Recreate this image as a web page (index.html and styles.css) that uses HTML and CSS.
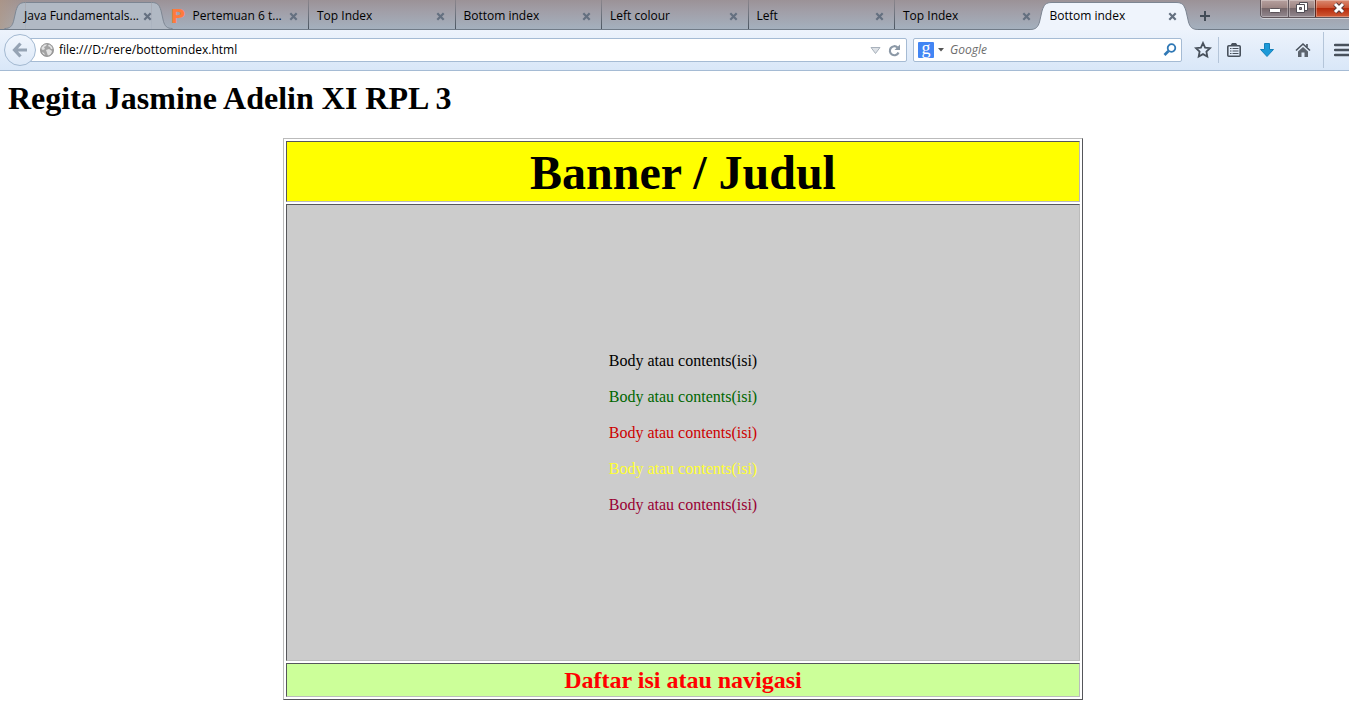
FILE: index.html
```html
<!DOCTYPE html>
<html>
<head>
<meta charset="utf-8">
<title>Bottom index</title>
<link rel="stylesheet" href="styles.css">
</head>

<body>

<!-- shared icons -->
<svg class="defs" width="0" height="0">
	<symbol id="x" viewBox="0 0 9 9"><path d="M1.3 1.3L7.7 7.7M7.7 1.3L1.3 7.7" fill="none" stroke="#647080" stroke-width="2.2"/></symbol>
	<symbol id="curve" viewBox="0 0 22 28"><path d="M0 27.500C6 27.500 8 25 9.500 20L12 9C14 2.500 16 .5 22 .5V28H0z"/><path class="edge" d="M0 27.500C6 27.500 8 25 9.500 20L12 9C14 2.500 16 .5 22 .5"/></symbol>
</svg>

<div class="tabbar">
	<div class="tabs">
		<div class="tab hover">
			<svg class="curve left"><use href="#curve"/></svg>
			<svg class="curve right"><use href="#curve"/></svg>
			<button class="title">Java Fundamentals...</button>
			<button class="close" aria-label="Close"><svg width="9" height="9"><use href="#x"/></svg></button>
		</div>
		<div class="tab">
			<span class="favicon">P</span>
			<button class="title">Pertemuan 6 t...</button>
			<button class="close" aria-label="Close"><svg width="9" height="9"><use href="#x"/></svg></button>
		</div>
		<div class="tab line">
			<button class="title">Top Index</button>
			<button class="close" aria-label="Close"><svg width="9" height="9"><use href="#x"/></svg></button>
		</div>
		<div class="tab line">
			<button class="title">Bottom index</button>
			<button class="close" aria-label="Close"><svg width="9" height="9"><use href="#x"/></svg></button>
		</div>
		<div class="tab line">
			<button class="title">Left colour</button>
			<button class="close" aria-label="Close"><svg width="9" height="9"><use href="#x"/></svg></button>
		</div>
		<div class="tab line">
			<button class="title">Left</button>
			<button class="close" aria-label="Close"><svg width="9" height="9"><use href="#x"/></svg></button>
		</div>
		<div class="tab line">
			<button class="title">Top Index</button>
			<button class="close" aria-label="Close"><svg width="9" height="9"><use href="#x"/></svg></button>
		</div>
		<div class="tab active">
			<svg class="curve left"><use href="#curve"/></svg>
			<svg class="curve right"><use href="#curve"/></svg>
			<button class="title">Bottom index</button>
			<button class="close" aria-label="Close"><svg width="9" height="9"><use href="#x"/></svg></button>
		</div>
	</div>
	<button class="newtab" aria-label="New tab"><svg width="12" height="12" viewBox="0 0 12 12"><path d="M6 1V11M1 6H11" stroke="#434c57" stroke-width="2"/></svg></button>
	<div class="winbuttons">
		<button class="min" aria-label="Minimize"><svg width="12" height="14" viewBox="0 0 12 14"><rect x=".5" y="8.5" width="11" height="4" rx="1" fill="#fff" stroke="#5b5359"/></svg></button>
		<button class="max" aria-label="Restore"><svg width="12" height="14" viewBox="0 0 12 14"><path d="M3.500 2.500H11.500V10.500H3.500z" fill="#fff" stroke="#514d55"/><path d="M.5 4.500H8.500V12.500H.5z" fill="#fff" stroke="#514d55"/><path d="M3.500 7.500H5.500V9.500H3.500z" fill="#8e8086" stroke="#514d55"/></svg></button>
		<button class="exit" aria-label="Close window"><svg width="14" height="14" viewBox="0 0 14 14"><path d="M3 4L11 12M11 4L3 12" stroke="#5b3a3a" stroke-width="5"/><path d="M3 4L11 12M11 4L3 12" stroke="#fff" stroke-width="3"/></svg></button>
	</div>
</div>

<div class="toolbar">
	<button class="back" aria-label="Back"><svg width="16" height="16" viewBox="0 0 16 16"><path d="M8.500 1.500L2.500 8L8.500 14.500M3 8H15" fill="none" stroke="#95a3b4" stroke-width="3.200"/></svg></button>
	<div class="box url">
		<svg width="14" height="14" viewBox="0 0 14 14"><circle cx="7" cy="7" r="6.800" fill="#a3a3a3"/><path d="M1 4L4 1L7 1L6 3L4 4L5 6L3 7L1 6zM9 1L12 3L13 6L11 6L10 4L8 3zM6 7L9 6L12 8L11 11L8 13L7 10zM2 9L4 10L5 12L3 11z" fill="#e2e2e2"/><circle cx="7" cy="7" r="6.300" fill="none" stroke="#929292"/></svg>
		<input type="text" aria-label="Address" value="file:///D:/rere/bottomindex.html">
		<svg class="arrow" width="11" height="9" viewBox="0 0 11 9"><path d="M1 1.500H10L5.500 7.500z" fill="#dde1e6" stroke="#a9b2bc"/></svg>
		<svg width="13" height="13" viewBox="0 0 13 13"><path d="M9.500 3.500A4.500 4.500 0 1 0 10.500 8.500" fill="none" stroke="#8b98a6" stroke-width="2.200"/><path d="M12 .5V6H6.500z" fill="#8b98a6"/></svg>
	</div>
	<div class="box search">
		<span class="google">g</span>
		<svg class="drop" width="6" height="4" viewBox="0 0 6 4"><path d="M0 0H6L3 3.500z" fill="#555"/></svg>
		<input type="text" aria-label="Search" placeholder="Google">
		<svg width="14" height="14" viewBox="0 0 14 14"><circle cx="8.500" cy="5" r="3.800" fill="none" stroke="#2f78b5" stroke-width="1.800"/><path d="M5.500 8L1.500 12" stroke="#2f78b5" stroke-width="2.600"/></svg>
	</div>
	<div class="icons">
		<button class="star" aria-label="Bookmark"><svg width="18" height="18" viewBox="0 0 18 18"><path d="M9 2L11.100 6.600L16 7.200L12.400 10.600L13.300 15.500L9 13.100L4.700 15.500L5.600 10.600L2 7.200L6.900 6.600z" fill="none" stroke="#48515c" stroke-width="1.800"/></svg></button>
		<button class="list" aria-label="Bookmarks list"><svg width="14" height="16" viewBox="0 0 14 16"><rect x=".8" y="3.800" width="12.400" height="10.400" rx="1" fill="none" stroke="#48515c" stroke-width="1.600"/><path d="M3 4L5 1H9L11 4z" fill="#48515c"/><path d="M3 6.500H4.500M5.500 6.500H11.500M3 9H4.500M5.500 9H11.500M3 11.500H4.500M5.500 11.500H11.500" stroke="#48515c" stroke-width="1.200"/></svg></button>
		<button aria-label="Downloads"><svg width="16" height="16" viewBox="0 0 16 16"><path d="M5.500 1.500H10.500V7.500H14.500L8 14.500L1.500 7.500H5.500z" fill="#1c9ad8" stroke="#1580ba"/></svg></button>
		<button aria-label="Home"><svg width="16" height="16" viewBox="0 0 16 16"><path d="M1 8.500L8 2L15 8.500" fill="none" stroke="#48515c" stroke-width="1.600"/><path d="M3 9.500L8 5L13 9.500V15H9.500V10.500H6.500V15H3z" fill="#5c646e"/><path d="M12 2V5" stroke="#48515c" stroke-width="1.600"/></svg></button>
		<button class="menu" aria-label="Menu"><svg width="16" height="14" viewBox="0 0 16 14"><path d="M1 2H15M1 7H15M1 12H15" stroke="#48515c" stroke-width="2.400" stroke-linecap="round"/></svg></button>
	</div>
</div>

<div class="page">
<h1>Regita Jasmine Adelin XI RPL 3</h1>

<table class="layout">
<tr>
	<td class="banner">Banner / Judul</td>
</tr>
<tr>
	<td class="contents">
		<p>Body atau contents(isi)</p>
		<p class="green">Body atau contents(isi)</p>
		<p class="red">Body atau contents(isi)</p>
		<p class="yellow">Body atau contents(isi)</p>
		<p class="maroon">Body atau contents(isi)</p>
	</td>
</tr>
<tr>
	<td class="navigasi">Daftar isi atau navigasi</td>
</tr>
</table>
</div>

</body>
</html>
```
FILE: styles.css
```css
body {
  margin: 0;
  background: #fff;
  color: #000;
  font-family: "Liberation Serif", "Times New Roman", serif;
  overflow: hidden;
}
button, input {
  margin: 0;
  padding: 0;
  border: 0;
  background: none;
  color: #000;
  font: 12px/16px "Open Sans", "Segoe UI", sans-serif;
}
svg {
  display: block;
  flex: none;
}
.defs {
  position: absolute;
}

/* tabs */
.tabbar {
  display: flex;
  height: 29px;
  border-bottom: 1px solid #707b88;
  background: linear-gradient(90deg, rgba(176,150,130,.7), rgba(176,150,130,0) 30px),
    linear-gradient(#9b9297, #a19fa8 40%, #a4b0be);
}
.tabs {
  display: flex;
  flex: 1;
  min-width: 0;
  margin-left: 15px;
}
.tab {
  position: relative;
  display: flex;
  flex: 1;
  min-width: 0;
  align-items: center;
  gap: 2px;
  box-sizing: border-box;
  padding: 3px 10px 0 9px;
}
.tab.line {
  background: linear-gradient(rgba(70,78,88,.2), #4c5560) no-repeat 0 0 / 1px 100%;
}
.tab .title {
  position: relative;
  flex: 1;
  min-width: 0;
  white-space: nowrap;
  text-align: left;
}
.tab .close {
  position: relative;
}
.favicon {
  width: 20px;
  color: #ff7a3d;
  font: bold 20px/16px "DejaVu Sans", sans-serif;
}
.curve {
  position: absolute;
  top: 2px;
  width: 22px;
  height: 28px;
}
.curve.left {
  left: -11px;
}
.curve.right {
  right: -11px;
  transform: scaleX(-1);
}
.edge {
  fill: none;
  stroke: #7c8592;
}
.hover::before, .active::before {
  content: "";
  position: absolute;
  top: 2px;
  right: 11px;
  bottom: 0;
  left: 11px;
  border-top: 1px solid #7c8592;
}
.hover {
  fill: #b1b9c4;
}
.hover .curve {
  height: 27px;
}
.hover::before {
  background: #b1b9c4;
}
.active {
  fill: #eff4fc;
}
.active::before {
  bottom: -1px;
  background: #eff4fc;
}
.newtab {
  display: flex;
  width: 73px;
  padding: 10px 0 0 12px;
}

.winbuttons {
  display: flex;
  width: 89px;
  height: 18px;
  box-sizing: border-box;
  border: solid #5f555b;
  border-width: 0 0 1px 1px;
  border-radius: 0 0 0 4px;
  box-shadow: 0 1px 0 #cfd1d6;
  overflow: hidden;
}
.winbuttons button {
  display: flex;
  flex: none;
  justify-content: center;
  width: 27px;
  background: linear-gradient(#b7a09f, #9c8583 45%, #76666a 50%, #92888f);
  box-shadow: inset 0 0 0 1px rgba(255,255,255,.3);
}
.winbuttons .max {
  border-left: 1px solid #5f555b;
}
.winbuttons .exit {
  width: 46px;
  border-left: 1px solid #5f2a20;
  background: linear-gradient(#d98a72, #cc5636 45%, #b72b0c 50%, #cf5a35);
}

/* toolbar */
.toolbar {
  display: flex;
  align-items: center;
  height: 40px;
  border-bottom: 1px solid #a5bbd4;
  background: linear-gradient(#edf3fc, #d9e7f8);
}
.back {
  position: relative;
  display: flex;
  align-items: center;
  justify-content: center;
  width: 32px;
  height: 32px;
  margin-left: 4px;
  box-sizing: border-box;
  border: 1px solid #a3b9d1;
  border-radius: 50%;
  background: linear-gradient(#f1f6fd, #dde9f8);
}
.box {
  display: flex;
  align-items: center;
  height: 24px;
  box-sizing: border-box;
  border: 1px solid #a5bbd4;
  border-radius: 2px;
  background: #fff;
}
.box input {
  flex: 1;
  min-width: 0;
  outline: 0;
}
.url {
  flex: 1;
  gap: 5px;
  margin-left: -8px;
  padding: 0 5px 0 11px;
}
.arrow {
  margin-right: 2px;
}
.search {
  width: 269px;
  margin-left: 6px;
  padding: 0 4px;
}
.google {
  width: 16px;
  height: 16px;
  border-radius: 1px;
  background: #4285f4;
  color: #fff;
  font: 18px/12px "Liberation Serif", serif;
  text-align: center;
}
.drop {
  margin: 0 6px 0 4px;
}
.search input {
  font-style: italic;
}
.search input::placeholder {
  color: #6d6d6d;
  opacity: 1;
}
.icons {
  display: flex;
  align-items: center;
  width: 167px;
}
.icons button {
  display: flex;
  flex: none;
  align-items: center;
  justify-content: center;
  width: 36px;
  height: 26px;
}
.icons .star {
  width: 30px;
  margin-left: 6px;
}
.icons .list {
  width: 31px;
  border-left: 1px solid #b4c5d9;
}
.icons .menu {
  height: 36px;
  margin-left: 2px;
  border-left: 1px solid #b4c5d9;
}

/* page, runs a scrollbar's width past the window */
.page {
  margin-right: -17px;
  padding: 9px 8px 0;
}
h1 {
  margin: 0 0 21px;
  font-size: 32px;
  line-height: 37px;
}
.layout {
  width: 800px;
  margin: 0 auto;
  border: 1px solid;
  border-color: #bbb #55565a #55565a #bbb;
  border-spacing: 2px;
}
.layout td {
  padding: 1px;
  border: 1px solid;
  border-color: #55565a #bbb #bbb #55565a;
  text-align: center;
}
.layout .banner {
  padding: 2px 1px 0;
  background: #ff0;
  font-size: 48px;
  font-weight: bold;
  line-height: 57px;
}
.contents {
  height: 453px;
  background: #ccc;
  font-size: 16px;
  line-height: 18px;
}
.contents p {
  margin: 18px 0;
}
.green {
  color: #060;
}
.red {
  color: #c00;
}
.yellow {
  color: #ff3;
}
.maroon {
  color: #903;
}
.navigasi {
  background: #cf9;
  color: #f00;
  font-size: 24px;
  font-weight: bold;
  line-height: 30px;
}
```
